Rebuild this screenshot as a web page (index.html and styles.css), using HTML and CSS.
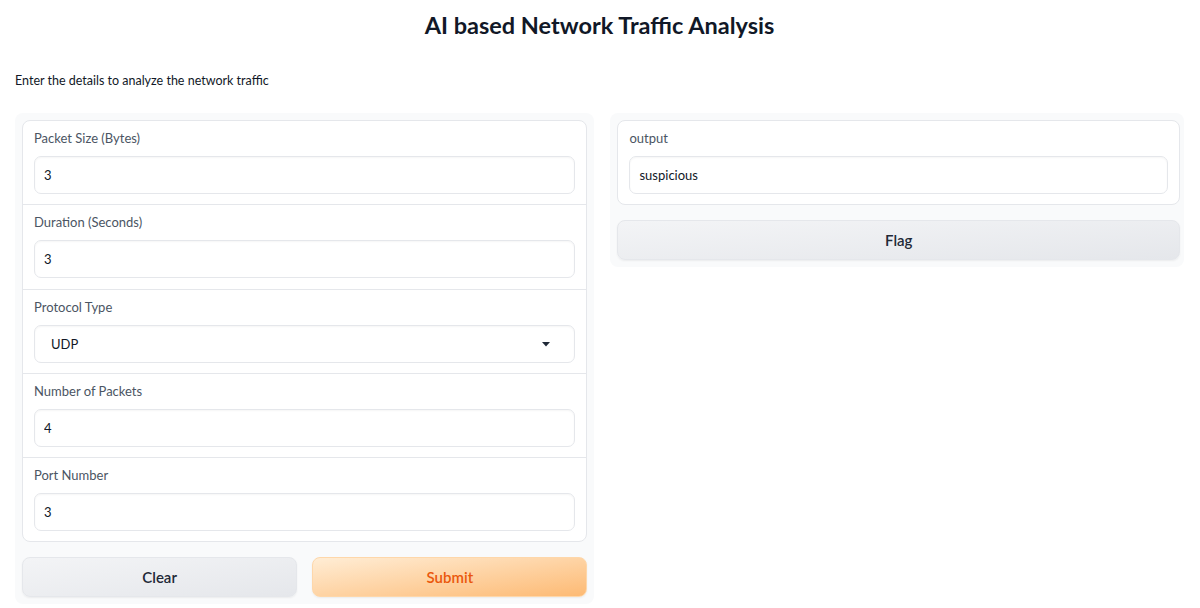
FILE: index.html
```html
<!DOCTYPE html>
<html lang="en">
<head>
<meta charset="UTF-8" />
<meta name="viewport" content="width=device-width, initial-scale=1" />
<title>AI based Network Traffic Analysis</title>
<link rel="stylesheet" href="styles.css">
</head>
<body>

<h1 class="title">AI based Network Traffic Analysis</h1>
<p class="description">Enter the details to analyze the network traffic</p>

<div class="columns">
  <!-- inputs -->
  <div class="panel panel-left">
    <div class="form-box">
      <div class="field">
        <label for="packetSize">Packet Size (Bytes)</label>
        <input type="number" id="packetSize" value="3" />
      </div>
      <div class="field">
        <label for="duration">Duration (Seconds)</label>
        <input type="number" id="duration" value="3" />
      </div>
      <div class="field">
        <label for="protocol">Protocol Type</label>
        <div class="select-wrap">
          <input type="text" id="protocol" value="UDP" readonly />
          <svg class="caret" width="10" height="6" viewBox="0 0 10 6"><path d="M1 1h8L5 5.5z" fill="#1f2937"/></svg>
        </div>
      </div>
      <div class="field">
        <label for="packets">Number of Packets</label>
        <input type="number" id="packets" value="4" />
      </div>
      <div class="field">
        <label for="port">Port Number</label>
        <input type="number" id="port" value="3" />
      </div>
    </div>
    <div class="btn-row">
      <button type="button" class="btn btn-secondary">Clear</button>
      <button type="button" class="btn btn-primary">Submit</button>
    </div>
  </div>

  <!-- output -->
  <div class="panel panel-right">
    <div class="form-box">
      <div class="field">
        <label for="output">output</label>
        <input type="text" id="output" value="suspicious" readonly />
      </div>
    </div>
    <button type="button" class="btn btn-secondary">Flag</button>
  </div>
</div>

</body>
</html>
```

FILE: styles.css
```css
body {
  font-family: Lato, 'Noto Sans', sans-serif;
  background: #ffffff;
  margin: 0;
  padding: 0 16px 0 15px;
  color: #1f2937;
}
.title {
  text-align: center;
  font-size: 23.5px;
  font-weight: 700;
  margin: 10px 0 0;
  line-height: 30px;
  color: #111827;
}
.description {
  font-size: 12.5px;
  margin: 32px 0 0;
  line-height: 18px;
  color: #111827;
}
.columns {
  display: flex;
  align-items: flex-start;
  gap: 16px;
  margin-top: 23px;
}
.panel {
  background: #f9fafb;
  border-radius: 8px;
  padding: 7px;
  display: flex;
  flex-direction: column;
  gap: 15px;
}
.panel-left {
  flex: 578 1 0;
}
.panel-right {
  flex: 575 1 0;
  padding-right: 4px;
}
.form-box {
  background: #fff;
  border: 1px solid #e5e7eb;
  border-radius: 8px;
  overflow: hidden;
}
.field {
  padding: 9px 11px 10.25px 11px;
  border-top: 1px solid #e5e7eb;
}
.field:first-child {
  border-top: none;
}
.panel-right .field {
  padding-bottom: 10px;
}
label {
  display: block;
  font-size: 13px;
  line-height: 17px;
  color: #4b5563;
  margin-bottom: 9px;
}
input {
  width: 100%;
  height: 38px;
  box-sizing: border-box;
  padding: 0 9px;
  font-family: inherit;
  font-size: 13px;
  color: #111827;
  border: 1px solid #e5e7eb;
  border-radius: 7px;
  background: #fff;
  box-shadow: inset 0 1px 2px rgba(0, 0, 0, 0.04);
  outline: none;
  -moz-appearance: textfield;
}
input::-webkit-outer-spin-button,
input::-webkit-inner-spin-button {
  -webkit-appearance: none;
  margin: 0;
}
.select-wrap {
  position: relative;
}
.select-wrap input {
  padding-left: 16px;
}
.caret {
  position: absolute;
  right: 24px;
  top: 16px;
}
.btn-row {
  display: flex;
  gap: 15px;
}
.btn {
  flex: 1;
  height: 40px;
  border-radius: 8px;
  font-family: inherit;
  font-size: 15px;
  font-weight: 600;
  cursor: pointer;
  box-shadow: 0 1px 2px rgba(0, 0, 0, 0.06);
}
.btn-secondary {
  background: linear-gradient(to bottom right, #f3f4f6, #e5e7eb);
  border: 1px solid #e5e7eb;
  color: #1f2937;
}
.btn-primary {
  background: linear-gradient(to bottom right, #ffedd5, #fdba74);
  border: 1px solid #fed7aa;
  color: #ea580c;
}
.panel-right .btn {
  flex: none;
}
```
